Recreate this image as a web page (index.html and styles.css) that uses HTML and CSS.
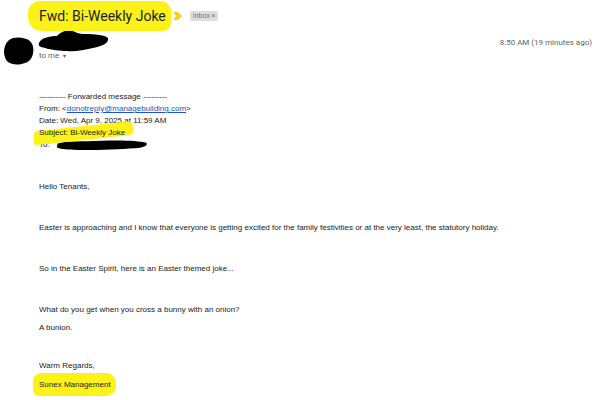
FILE: index.html
```html
<!DOCTYPE html>
<html>
<head>
<meta charset="UTF-8">
<link rel="stylesheet" href="styles.css">
</head>
<body>
<div class="header">
  <h1 class="subject-line"><span class="hl hl-title">Fwd: Bi-Weekly Joke</span></h1>
  <svg class="marker" width="9" height="8" viewBox="0 0 9 8"><path d="M0 0h5l4 4-4 4H0l3-4z" fill="#f2d21b"/></svg>
  <span class="chip">Inbox <span class="chip-x">×</span></span>
</div>

<div class="sender">
  <svg class="avatar" width="31" height="28" viewBox="0 0 31 28"><path d="M6 3C11 -1 22 0 27 4 32 9 31 18 27 23 22 28 10 29 5 25 0 21 -1 9 6 3z" fill="#000"/></svg>
  <div class="sender-info">
    <svg class="scribble" width="72" height="24" viewBox="0 0 72 24"><path d="M2 14C4 9 12 7 20 7 24 3 30 0 36 2 40 4 42 5 48 5 58 5 68 6 71 9 72 14 66 17 56 19 46 21 38 23 30 22 24 22 14 21 8 19 3 18 1 17 2 14z" fill="#000"/></svg>
    <div class="to-me">to me <span class="caret">▾</span></div>
  </div>
  <div class="time">8:50 AM (19 minutes ago)</div>
</div>

<div class="message">
  <div class="fwd">
    <div>---------- Forwarded message ---------</div>
    <div>From: &lt;<a href="#">donotreply@managebuilding.com</a>&gt;</div>
    <div>Date: Wed, Apr 9, 2025 at 11:59 AM</div>
    <div><span class="hl hl-subject">Subject: Bi-Weekly Joke</span></div>
    <div class="to-line">To: <svg class="scribble-to" width="100" height="12" viewBox="0 0 100 13"><path d="M2 5C10 2 30 3 50 2 70 1 90 2 98 4 100 7 96 9 86 10 70 11 50 12 30 12 14 12 4 11 1 9 0 7 2 5z" fill="#000"/></svg></div>
  </div>

  <p class="para first">Hello Tenants,</p>
  <p class="para">Easter is approaching and I know that everyone is getting excited for the family festivities or at the very least, the statutory holiday.</p>
  <p class="para">So in the Easter Spirit, here is an Easter themed joke...</p>
  <p class="para">What do you get when you cross a bunny with an onion?</p>
  <p class="para tight">A bunion.</p>
  <p class="para closing">Warm Regards,</p>
  <p class="para sign"><span class="hl hl-sign">Sunex Management</span></p>
</div>
</body>
</html>
```

FILE: styles.css
```css
* {
  box-sizing: border-box;
  margin: 0;
  padding: 0;
}

body {
  width: 598px;
  height: 400px;
  overflow: hidden;
  background: #ffffff;
  font-family: "Liberation Sans", Arial, sans-serif;
  color: #222222;
}

.header {
  display: flex;
  align-items: center;
  height: 32px;
  padding-left: 39px;
}

.subject-line {
  font-family: Roboto, "Open Sans", sans-serif;
  font-size: 14px;
  font-weight: 400;
  color: #202124;
}

.hl {
  position: relative;
  z-index: 0;
}

.hl::before {
  content: "";
  position: absolute;
  z-index: -1;
  background: #fbf21a;
}

.hl-title::before {
  left: -11px;
  right: -5px;
  top: -7px;
  bottom: -7px;
  border-radius: 12px 10px 8px 14px;
}

.marker {
  margin-left: 7px;
}

.chip {
  margin-left: 8px;
  padding: 1px 3px;
  background: #dddddd;
  border-radius: 2px;
  font-family: Roboto, sans-serif;
  font-size: 7px;
  line-height: 8px;
  color: #777777;
}

.sender {
  display: flex;
  align-items: flex-start;
  height: 59px;
  padding-left: 3px;
  padding-right: 6px;
}

.avatar {
  margin-top: 5px;
}

.sender-info {
  margin-left: 3px;
  margin-top: -3px;
  display: flex;
  flex-direction: column;
}

.to-me {
  margin-top: -2px;
  margin-left: 2px;
  font-family: Roboto, sans-serif;
  font-size: 8px;
  color: #5f6368;
}

.caret {
  font-size: 6px;
  margin-left: 2px;
}

.time {
  margin-left: auto;
  margin-top: 6px;
  font-family: Roboto, sans-serif;
  font-size: 8px;
  color: #5f6368;
}

.message {
  padding-left: 39px;
  font-size: 8px;
  line-height: 12px;
}

.fwd a {
  color: #1a55c9;
}

.hl-subject::before {
  left: -5px;
  right: -8px;
  top: -2px;
  bottom: -3px;
  border-radius: 3px 6px 4px 2px;
  transform: skewY(-6deg);
}

.to-line {
  display: flex;
  align-items: center;
  height: 12px;
}

.scribble-to {
  margin-left: 2px;
}

.para {
  margin-top: 29px;
}

.para.first {
  margin-top: 30px;
}

.para.tight {
  margin-top: 6px;
}

.para.closing {
  margin-top: 26px;
}

.para.sign {
  margin-top: 7px;
}

.hl-sign::before {
  left: -6px;
  right: -5px;
  top: -7px;
  bottom: -7px;
  border-radius: 8px 10px 10px 6px;
}
```
